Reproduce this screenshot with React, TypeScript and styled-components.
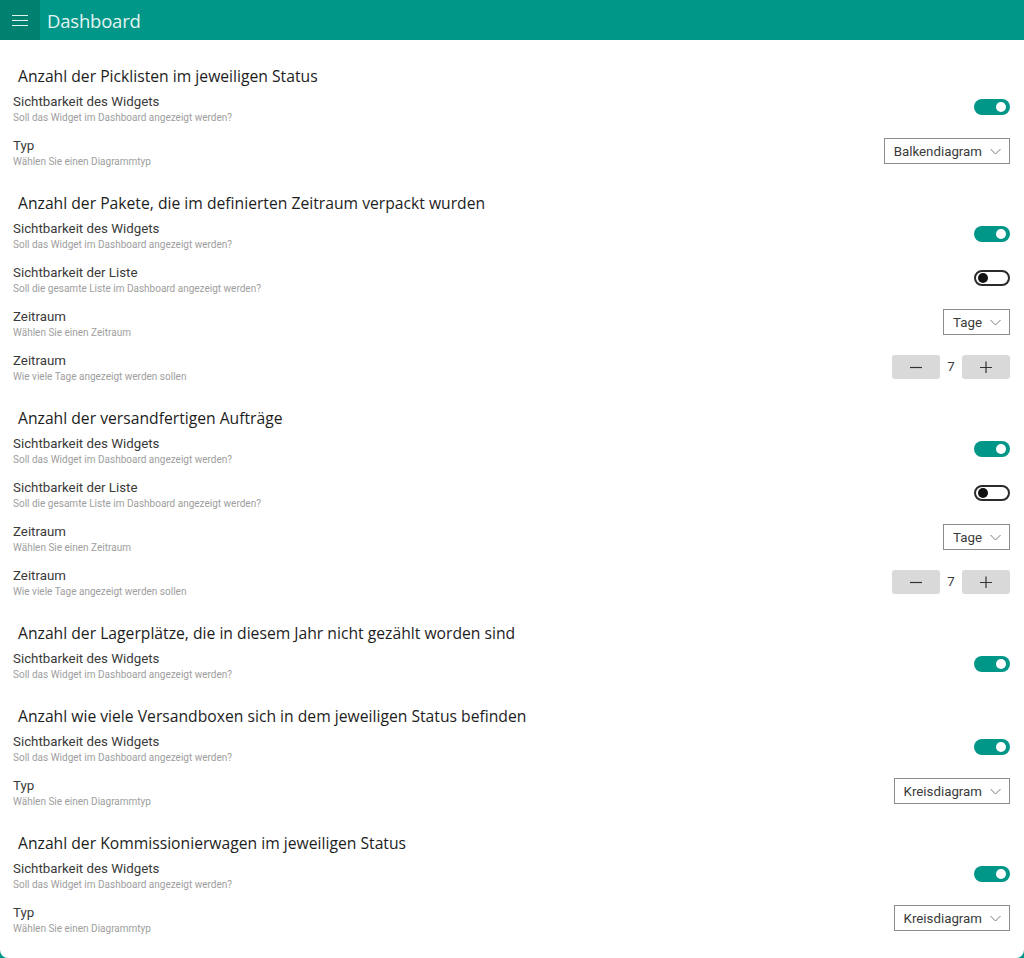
import React from 'react'
import styled, { createGlobalStyle } from 'styled-components'

const GlobalStyle = createGlobalStyle`
  html, body {
    margin: 0;
    padding: 0;
    background: #009688;
    font-family: Roboto, "Liberation Sans", sans-serif;
  }
  * { box-sizing: border-box; }
`

const Page = styled.div`
  min-height: 100vh;
  display: flex;
  flex-direction: column;
`

const TopBar = styled.header`
  height: 40px;
  display: flex;
  align-items: center;
  background: #009688;
  color: #e3f4f1;
`

const MenuButton = styled.div`
  width: 40px;
  height: 40px;
  display: flex;
  flex-direction: column;
  align-items: center;
  justify-content: center;
  gap: 4px;
  background: #00806f;
`

const MenuLine = styled.span`
  width: 16px;
  height: 1px;
  background: #dff2ee;
`

const TopTitle = styled.h1`
  margin: 0 0 0 7px;
  font-family: "Open Sans", "Noto Sans", sans-serif;
  font-weight: 400;
  font-size: 18.5px;
  letter-spacing: -0.2px;
`

const Content = styled.main`
  flex: 1;
  background: #fff;
  border-radius: 0 0 8px 8px;
  padding: 8px 0 16px;
`

const Section = styled.section`
  margin-top: 18px;
`

const SectionTitle = styled.h2`
  margin: 0;
  padding-left: 18px;
  height: 21px;
  line-height: 21px;
  font-family: "Open Sans", "Noto Sans", sans-serif;
  font-weight: 400;
  font-size: 15.7px;
  color: #1d1d1d;
`

const Row = styled.div`
  height: 44px;
  display: flex;
  align-items: center;
  justify-content: space-between;
  padding: 0 14px 0 13px;
`

const RowText = styled.div`
  display: flex;
  flex-direction: column;
`

const Label = styled.div`
  font-size: 13.3px;
  line-height: 16px;
  color: #3a3a3a;
`

const Hint = styled.div`
  font-size: 10px;
  line-height: 13px;
  margin-top: 1px;
  color: #9e9e9e;
`

const Toggle = styled.div<{ $on: boolean }>`
  width: 36px;
  height: 16px;
  border-radius: 8px;
  position: relative;
  margin-bottom: 4px;
  background: ${({ $on }) => ($on ? '#009688' : '#fff')};
  border: ${({ $on }) => ($on ? 'none' : '2px solid #2b2b2b')};

  &::after {
    content: '';
    position: absolute;
    top: 50%;
    width: 10px;
    height: 10px;
    border-radius: 50%;
    transform: translateY(-50%);
    background: ${({ $on }) => ($on ? '#fff' : '#111')};
    ${({ $on }) => ($on ? 'right: 4px;' : 'left: 2px;')}
  }
`

const Select = styled.div`
  height: 26px;
  display: flex;
  align-items: center;
  gap: 8px;
  padding: 0 8px 0 9px;
  border: 1px solid #8c8c8c;
  font-size: 13.3px;
  color: #3a3a3a;
  margin-bottom: 4px;
`

const Stepper = styled.div`
  display: flex;
  align-items: center;
  gap: 7px;
  margin-bottom: 3px;
`

const StepButton = styled.div`
  width: 48px;
  height: 24px;
  border-radius: 3px;
  background: #d9d9d9;
  display: flex;
  align-items: center;
  justify-content: center;
`

const StepValue = styled.span`
  width: 8px;
  text-align: center;
  font-size: 13.3px;
  color: #3a3a3a;
`

const Chevron = () => (
  <svg width="11" height="7" viewBox="0 0 11 7" fill="none">
    <path d="M0.5 1L5.5 6L10.5 1" stroke="#7a7a7a" strokeWidth="1" />
  </svg>
)

const Minus = () => (
  <svg width="12" height="12" viewBox="0 0 12 12">
    <path d="M0 6.5H12" stroke="#333" strokeWidth="1.2" />
  </svg>
)

const Plus = () => (
  <svg width="12" height="12" viewBox="0 0 12 12">
    <path d="M0 6.5H12M6 0.5V12.5" stroke="#333" strokeWidth="1.2" />
  </svg>
)

type Control =
  | { kind: 'toggle'; on: boolean }
  | { kind: 'select'; value: string }
  | { kind: 'stepper'; value: number }

interface Setting {
  label: string
  hint: string
  control: Control
}

const widget = (on = true): Setting => ({
  label: 'Sichtbarkeit des Widgets',
  hint: 'Soll das Widget im Dashboard angezeigt werden?',
  control: { kind: 'toggle', on },
})

const list: Setting = {
  label: 'Sichtbarkeit der Liste',
  hint: 'Soll die gesamte Liste im Dashboard angezeigt werden?',
  control: { kind: 'toggle', on: false },
}

const typ = (value: string): Setting => ({
  label: 'Typ',
  hint: 'Wählen Sie einen Diagrammtyp',
  control: { kind: 'select', value },
})

const period: Setting = {
  label: 'Zeitraum',
  hint: 'Wählen Sie einen Zeitraum',
  control: { kind: 'select', value: 'Tage' },
}

const days: Setting = {
  label: 'Zeitraum',
  hint: 'Wie viele Tage angezeigt werden sollen',
  control: { kind: 'stepper', value: 7 },
}

const sections: { title: string; rows: Setting[] }[] = [
  { title: 'Anzahl der Picklisten im jeweiligen Status', rows: [widget(), typ('Balkendiagram')] },
  {
    title: 'Anzahl der Pakete, die im definierten Zeitraum verpackt wurden',
    rows: [widget(), list, period, days],
  },
  { title: 'Anzahl der versandfertigen Aufträge', rows: [widget(), list, period, days] },
  { title: 'Anzahl der Lagerplätze, die in diesem Jahr nicht gezählt worden sind', rows: [widget()] },
  {
    title: 'Anzahl wie viele Versandboxen sich in dem jeweiligen Status befinden',
    rows: [widget(), typ('Kreisdiagram')],
  },
  { title: 'Anzahl der Kommissionierwagen im jeweiligen Status', rows: [widget(), typ('Kreisdiagram')] },
]

function ControlView({ control }: { control: Control }) {
  if (control.kind === 'toggle') return <Toggle $on={control.on} />
  if (control.kind === 'select')
    return (
      <Select>
        {control.value}
        <Chevron />
      </Select>
    )
  return (
    <Stepper>
      <StepButton>
        <Minus />
      </StepButton>
      <StepValue>{control.value}</StepValue>
      <StepButton>
        <Plus />
      </StepButton>
    </Stepper>
  )
}

export default function App() {
  return (
    <Page>
      <GlobalStyle />
      <TopBar>
        <MenuButton>
          <MenuLine />
          <MenuLine />
          <MenuLine />
        </MenuButton>
        <TopTitle>Dashboard</TopTitle>
      </TopBar>
      <Content>
        {sections.map((s) => (
          <Section key={s.title}>
            <SectionTitle>{s.title}</SectionTitle>
            {s.rows.map((r, i) => (
              <Row key={i}>
                <RowText>
                  <Label>{r.label}</Label>
                  <Hint>{r.hint}</Hint>
                </RowText>
                <ControlView control={r.control} />
              </Row>
            ))}
          </Section>
        ))}
      </Content>
    </Page>
  )
}
